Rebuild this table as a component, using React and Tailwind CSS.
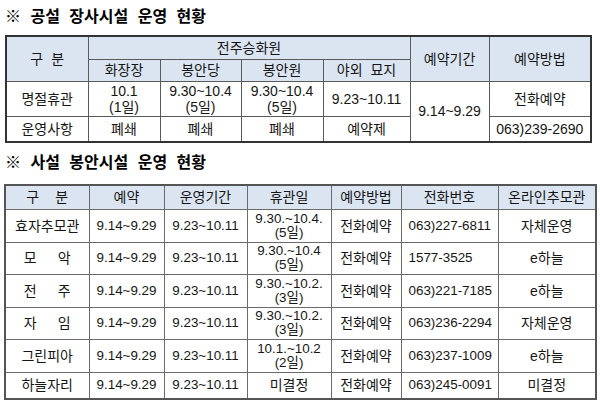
import React from 'react'

const FONT = "font-['Liberation_Sans','Noto_Sans_CJK_KR',sans-serif]"

// 한 칸 셀
function C({ children, head, className = '', line = 'border-[#5a5a5a]', ...rest }) {
  return (
    <td
      className={`border ${line} p-0 text-center align-middle ${head ? 'bg-[#dbe5f1]' : ''} ${className}`}
      {...rest}
    >
      {children}
    </td>
  )
}

// 글자 사이를 벌린 칸 제목 (구 분, 모 악 ...)
function Spread({ w, a, b }) {
  return (
    <span className={`inline-flex justify-between ${w}`}>
      <span>{a}</span>
      <span>{b}</span>
    </span>
  )
}

function Title({ children }) {
  return (
    <h2 className="ml-[5px] text-[16px] font-bold leading-[20px] text-black [word-spacing:5px]">
      {children}
    </h2>
  )
}

function PublicTable() {
  return (
    <table className="ml-[5px] w-[585px] table-fixed border-collapse border-2 border-[#333] text-[14px] leading-[16px] text-[#161616]">
      <colgroup>
        <col className="w-[82px]" />
        <col className="w-[72px]" />
        <col className="w-[81px]" />
        <col className="w-[82px]" />
        <col className="w-[87px]" />
        <col className="w-[79px]" />
        <col className="w-[102px]" />
      </colgroup>
      <tbody>
        <tr className="h-[23px]">
          <C head rowSpan={2}><Spread w="w-[34px]" a="구" b="분" /></C>
          <C head colSpan={4}>전주승화원</C>
          <C head rowSpan={2}>예약기간</C>
          <C head rowSpan={2}>예약방법</C>
        </tr>
        <tr className="h-[22px]">
          <C head>화장장</C>
          <C head>봉안당</C>
          <C head>봉안원</C>
          <C head className="[word-spacing:4px]">야외 묘지</C>
        </tr>
        <tr className="h-[35px]">
          <C>명절휴관</C>
          <C>10.1<br />(1일)</C>
          <C>9.30~10.4<br />(5일)</C>
          <C>9.30~10.4<br />(5일)</C>
          <C>9.23~10.11</C>
          <C rowSpan={2}>9.14~9.29</C>
          <C>전화예약</C>
        </tr>
        <tr className="h-[26px]">
          <C>운영사항</C>
          <C>폐쇄</C>
          <C>폐쇄</C>
          <C>폐쇄</C>
          <C>예약제</C>
          <C>063)239-2690</C>
        </tr>
      </tbody>
    </table>
  )
}

const rows = [
  { name: '효자추모관', closed: ['9.30.~10.4.', '(5일)'], tel: '063)227-6811', online: '자체운영' },
  { name: ['모', '악'], closed: ['9.30.~10.4', '(5일)'], tel: '1577-3525', online: 'e하늘' },
  { name: ['전', '주'], closed: ['9.30.~10.2.', '(3일)'], tel: '063)221-7185', online: 'e하늘' },
  { name: ['자', '임'], closed: ['9.30.~10.2.', '(3일)'], tel: '063)236-2294', online: '자체운영' },
  { name: '그린피아', closed: ['10.1.~10.2', '(2일)'], tel: '063)237-1009', online: 'e하늘' },
  { name: '하늘자리', closed: '미결정', tel: '063)245-0091', online: '미결정' },
]
const rowH = ['h-[33px]', 'h-[32px]', 'h-[33px]', 'h-[32px]', 'h-[33px]', 'h-[27px]']

function PrivateTable() {
  const L = 'border-[#6b6b6b]'
  return (
    <table className="ml-[4px] w-[591px] table-fixed border-collapse border-2 border-[#555] text-[14px] leading-[14px] text-[#161616]">
      <colgroup>
        <col className="w-[84px]" />
        <col className="w-[75px]" />
        <col className="w-[83px]" />
        <col className="w-[84px]" />
        <col className="w-[70px]" />
        <col className="w-[97px]" />
        <col className="w-[98px]" />
      </colgroup>
      <tbody>
        <tr className="h-[24px]">
          <C head line={L}><Spread w="w-[42px]" a="구" b="분" /></C>
          <C head line={L}>예약</C>
          <C head line={L}>운영기간</C>
          <C head line={L}>휴관일</C>
          <C head line={L}>예약방법</C>
          <C head line={L}>전화번호</C>
          <C head line={L}>온라인추모관</C>
        </tr>
        {rows.map((r, i) => (
          <tr key={i} className={rowH[i]}>
            <C line={L}>
              {Array.isArray(r.name) ? <Spread w="w-[47px]" a={r.name[0]} b={r.name[1]} /> : r.name}
            </C>
            <C line={L} className="text-[13.4px]">9.14~9.29</C>
            <C line={L} className="text-[13.4px]">9.23~10.11</C>
            <C line={L} className="text-[13.4px]">
              {Array.isArray(r.closed) ? (
                <>
                  {r.closed[0]}
                  <br />
                  {r.closed[1]}
                </>
              ) : (
                <span className="text-[14px]">{r.closed}</span>
              )}
            </C>
            <C line={L}>전화예약</C>
            <C line={L} className="pl-[7px] text-left text-[13.4px]">{r.tel}</C>
            <C line={L}>{r.online}</C>
          </tr>
        ))}
      </tbody>
    </table>
  )
}

export default function App() {
  return (
    <div className={`h-[408px] w-[600px] overflow-hidden bg-white pt-[7px] ${FONT}`}>
      <Title>※ 공설 장사시설 운영 현황</Title>
      <div className="mt-[8px]">
        <PublicTable />
      </div>
      <div className="mt-[10px]">
        <Title>※ 사설 봉안시설 운영 현황</Title>
      </div>
      <div className="mt-[11px]">
        <PrivateTable />
      </div>
    </div>
  )
}
